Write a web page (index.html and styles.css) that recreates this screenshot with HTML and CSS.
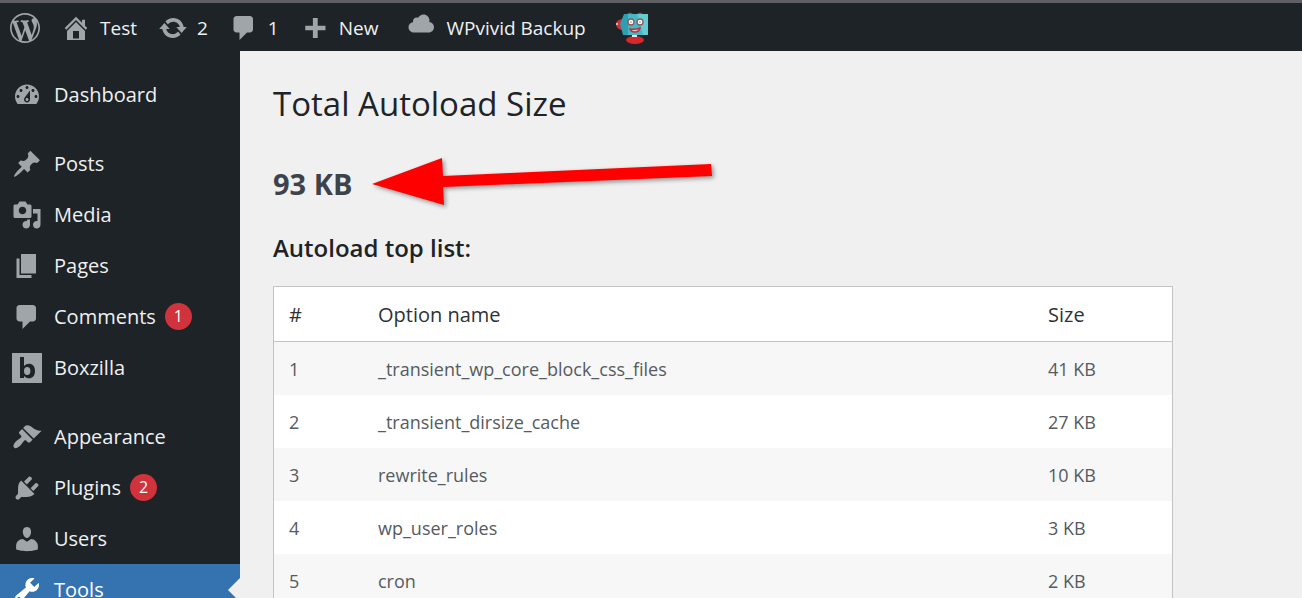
FILE: index.html
```html
<!DOCTYPE html>
<html lang="en">
<head>
    <meta charset="UTF-8">
    <meta name="viewport" content="width=device-width, initial-scale=1.0">
    <title>Total Autoload Size</title>
    <link rel="stylesheet" href="styles.css">
</head>
<body>

    <!-- Admin bar -->
    <header class="adminbar">
        <a class="bar-item" href="#" aria-label="About WordPress">
            <svg class="icon" viewBox="0 0 20 20"><path d="M20 10c0-5.51-4.49-10-10-10C4.48 0 0 4.49 0 10c0 5.52 4.48 10 10 10 5.51 0 10-4.48 10-10zM7.78 15.37L4.37 6.22c.55-.02 1.17-.08 1.17-.08.5-.06.44-1.13-.06-1.11 0 0-1.45.11-2.37.11-.18 0-.37 0-.58-.01C4.12 2.69 6.87 1.11 10 1.11c2.33 0 4.45.87 6.05 2.34-.68-.11-1.65.39-1.65 1.58 0 .74.45 1.36.9 2.1.35.61.55 1.36.55 2.46 0 1.49-1.4 5-1.4 5l-3.03-8.37c.54-.02.82-.17.82-.17.5-.05.44-1.25-.06-1.22 0 0-1.44.12-2.38.12-.87 0-2.33-.12-2.33-.12-.5-.03-.56 1.2-.06 1.22l.92.08 1.26 3.41zM17.41 10c.24-.64.74-1.87.43-4.25.7 1.29 1.05 2.71 1.05 4.25 0 3.29-1.73 6.24-4.4 7.78.97-2.59 1.94-5.2 2.92-7.78zM6.1 18.09C3.12 16.65 1.11 13.53 1.11 10c0-1.3.23-2.48.72-3.59C3.25 10.3 4.67 14.2 6.1 18.09zm4.03-6.63l2.58 6.98c-.86.29-1.76.45-2.71.45-.79 0-1.57-.11-2.29-.33.81-2.38 1.62-4.74 2.42-7.1z"/></svg>
        </a>
        <a class="bar-item" href="#">
            <svg class="icon" viewBox="0 0 20 20"><path d="M16 8.5l1.53 1.53-1.06 1.06L10 4.6l-6.47 6.49-1.06-1.06L10 2.5l4 4v-2h2v4zm-6-2.46l6 5.99V18H4v-5.97zM12 17v-5H8v5h4z"/></svg>
            <span>Test</span>
        </a>
        <a class="bar-item" href="#">
            <svg class="icon" viewBox="0 0 20 20"><path d="M10.2 3.28c3.53 0 6.43 2.61 6.92 6h2.08l-3.5 4-3.5-4h2.32c-.45-1.97-2.21-3.45-4.32-3.45-1.45 0-2.73.71-3.54 1.78L4.95 5.66C6.23 4.2 8.11 3.28 10.2 3.28zm-.4 13.44c-3.52 0-6.43-2.61-6.92-6H.8l3.5-4c1.17 1.33 2.33 2.67 3.5 4H5.48c.45 1.97 2.21 3.45 4.32 3.45 1.45 0 2.73-.71 3.54-1.78l1.71 1.95c-1.28 1.46-3.15 2.38-5.25 2.38z"/></svg>
            <span>2</span>
        </a>
        <a class="bar-item" href="#">
            <svg class="icon" viewBox="0 0 20 20"><path d="M5 2h9c1.1 0 2 .9 2 2v7c0 1.1-.9 2-2 2h-2l-5 5v-5H5c-1.1 0-2-.9-2-2V4c0-1.1.9-2 2-2z"/></svg>
            <span>1</span>
        </a>
        <a class="bar-item" href="#">
            <svg class="icon" viewBox="0 0 20 20"><path d="M17 8.5v3h-5.2v5.2H8.6v-5.2H3.5v-3h5.1V3.3h3.2v5.2z"/></svg>
            <span>New</span>
        </a>
        <a class="bar-item plugin-item" href="#">
            <svg class="icon" viewBox="0 3 20 20"><path d="M14.9 9c1.8.2 3.1 1.7 3.1 3.5 0 1.9-1.6 3.5-3.5 3.5h-10C2.6 16 1 14.4 1 12.5 1 10.7 2.3 9.3 4.1 9 4 8.9 4 8.7 4 8.5 4 7.1 5.1 6 6.5 6c.3 0 .7.1.9.2C8.1 4.9 9.4 4 11 4c2.2 0 4 1.8 4 4 0 .4-.1.7-.1 1z"/></svg>
            <span>WPvivid Backup</span>
        </a>
        <a class="bar-item plugin-item" href="#" aria-label="Robot">
            <svg class="robot" viewBox="0 0 34 36">
                <path fill="#c9343a" d="M12 4q3-3 6 0zM22 4q3-3 6 0z"/>
                <path fill="#c9343a" d="M7 9v11q-6-1-6-6 0-4 6-5z"/>
                <circle cx="2" cy="14" r="1" fill="#f3d9da"/>
                <path fill="#2e9fae" d="M9 4L5 14l3 11h6V4z"/>
                <path fill="#45b9c4" d="M13 4h20v21H13z"/>
                <path fill="#62cbd3" d="M22 4h11v21h-5z"/>
                <circle cx="16" cy="12" r="3" fill="#fff" stroke="#8c5763" stroke-width="1.3"/>
                <circle cx="25" cy="12" r="3" fill="#fff" stroke="#8c5763" stroke-width="1.3"/>
                <circle cx="16" cy="12" r="1" fill="#d9a9ae"/>
                <circle cx="25" cy="12" r="1" fill="#d9a9ae"/>
                <path fill="#e9c3c6" stroke="#b8343f" stroke-width="1.5" d="M15 19q5 1 10-1-1 4-5 4-4 0-5-3z"/>
                <ellipse cx="20" cy="30" rx="9" ry="4" fill="#d5282d"/>
                <path fill="#e8e8e8" d="M17 25h5v2h-5z"/>
            </svg>
        </a>
    </header>

    <div class="layout">
        <!-- Sidebar menu -->
        <nav class="sidebar">
            <a class="menu-item" href="#">
                <svg class="icon" viewBox="0 0 20 20"><path d="M3.76 16h12.48c1.1-1.37 1.76-3.11 1.76-5 0-4.42-3.58-8-8-8s-8 3.58-8 8c0 1.89.66 3.63 1.76 5zM10 4c.55 0 1 .45 1 1s-.45 1-1 1-1-.45-1-1 .45-1 1-1zM6 6c.55 0 1 .45 1 1s-.45 1-1 1-1-.45-1-1 .45-1 1-1zm8 0c.55 0 1 .45 1 1s-.45 1-1 1-1-.45-1-1 .45-1 1-1zm-5.37 5.55L12 7v6c0 1.1-.9 2-2 2s-2-.9-2-2c0-.57.24-1.08.63-1.45zM4 10c.55 0 1 .45 1 1s-.45 1-1 1-1-.45-1-1 .45-1 1-1zm12 0c.55 0 1 .45 1 1s-.45 1-1 1-1-.45-1-1 .45-1 1-1zm-5 3c0-.55-.45-1-1-1s-1 .45-1 1 .45 1 1 1 1-.45 1-1z"/></svg>
                Dashboard
            </a>
            <a class="menu-item group-start" href="#">
                <svg class="icon" viewBox="0 0 20 20"><path d="M10.44 3.02l1.82-1.82 6.36 6.35-1.83 1.82c-1.05-.68-2.48-.57-3.41.36l-.75.75c-.92.93-1.04 2.35-.35 3.41l-1.83 1.82-2.41-2.41-2.8 2.79c-.42.42-3.38 2.71-3.8 2.29s1.86-3.39 2.28-3.81l2.79-2.79L4.1 9.36l1.83-1.82c1.05.69 2.48.57 3.4-.36l.75-.75c.93-.92 1.05-2.35.36-3.41z"/></svg>
                Posts
            </a>
            <a class="menu-item" href="#">
                <svg class="icon" viewBox="0 0 20 20"><path d="M13 11V4c0-.55-.45-1-1-1h-1.67L9 1H5L3.67 3H2c-.55 0-1 .45-1 1v7c0 .55.45 1 1 1h10c.55 0 1-.45 1-1zM7 4.5c1.38 0 2.5 1.12 2.5 2.5S8.38 9.5 7 9.5 4.5 8.38 4.5 7 5.62 4.5 7 4.5zM14 6h5v10.5c0 1.38-1.12 2.5-2.5 2.5S14 17.88 14 16.5s1.12-2.5 2.5-2.5c.17 0 .34.02.5.05V9h-3V6zm-4 8.05V13h2v3.5c0 1.38-1.12 2.5-2.5 2.5S7 17.88 7 16.5 8.12 14 9.5 14c.17 0 .34.02.5.05z"/></svg>
                Media
            </a>
            <a class="menu-item" href="#">
                <svg class="icon" viewBox="0 0 20 20"><path d="M6 15V2h10v13H6zm-1 1h8v2H3V5h2v11z"/></svg>
                Pages
            </a>
            <a class="menu-item" href="#">
                <svg class="icon" viewBox="0 0 20 20"><path d="M5 2h9c1.1 0 2 .9 2 2v7c0 1.1-.9 2-2 2h-2l-5 5v-5H5c-1.1 0-2-.9-2-2V4c0-1.1.9-2 2-2z"/></svg>
                Comments <span class="count">1</span>
            </a>
            <a class="menu-item" href="#">
                <svg class="icon" viewBox="0 0 30 30"><path fill-rule="evenodd" d="M0 0h30v30H0zM8 4v21h4v-2c4 4 11 3 11-5s-7-9-11-5V4zM12 18a3.200 4 0 1 0 6.400 0a3.200 4 0 1 0-6.400 0z"/></svg>
                Boxzilla
            </a>
            <a class="menu-item group-start" href="#">
                <svg class="icon" viewBox="0 0 20 20"><path d="M14.48 11.06L7.41 3.99l1.5-1.5c.5-.56 2.3-.47 3.51.32 1.21.8 1.43 1.28 2.91 2.1 1.18.64 2.45 1.26 4.45.85zm-.71.71L6.7 4.7 4.93 6.47c-.39.39-.39 1.02 0 1.41l1.06 1.06c.39.39.39 1.03 0 1.42-.6.6-1.43 1.11-2.21 1.69-.35.26-.7.53-1.01.84C1.43 14.23.4 16.08 1.4 17.07c.99 1 2.84-.03 4.18-1.36.31-.31.58-.66.85-1.02.57-.78 1.08-1.61 1.69-2.21.39-.39 1.02-.39 1.41 0l1.06 1.06c.39.39 1.02.39 1.41 0z"/></svg>
                Appearance
            </a>
            <a class="menu-item" href="#">
                <svg class="icon" viewBox="0 0 20 20"><path d="M13.11 4.36L9.87 7.6 8 5.73l3.24-3.24c.35-.34 1.05-.2 1.56.32.52.51.66 1.21.31 1.55zm-8 1.77l.91-1.12 9.01 9.01-1.19.84c-.71.71-2.63 1.16-3.82 1.16H6.14L4.9 17.26c-.59.59-1.54.59-2.12 0-.59-.58-.59-1.53 0-2.12l1.24-1.24v-3.88c0-1.13.4-3.19 1.09-3.89zm7.26 3.97l3.24-3.24c.34-.35 1.04-.21 1.55.31.52.51.66 1.21.31 1.55l-3.24 3.25z"/></svg>
                Plugins <span class="count">2</span>
            </a>
            <a class="menu-item" href="#">
                <svg class="icon" viewBox="0 0 20 20"><path d="M10 9.25c-2.27 0-2.73-3.44-2.73-3.44C7 4.02 7.82 2 9.97 2c2.16 0 2.98 2.02 2.71 3.81 0 0-.41 3.44-2.68 3.44zm0 2.57L12.72 10c2.39 0 4.52 2.33 4.52 4.53v2.49s-3.65 1.13-7.24 1.13c-3.65 0-7.24-1.13-7.24-1.13v-2.49c0-2.25 1.94-4.48 4.47-4.48z"/></svg>
                Users
            </a>
            <a class="menu-item current" href="#">
                <svg class="icon" viewBox="0 0 20 20"><path d="M16.68 9.77c-1.34 1.34-3.3 1.67-4.95.99l-5.41 6.52c-.99.99-2.59.99-3.58 0s-.99-2.59 0-3.57l6.52-5.42c-.68-1.65-.35-3.61.99-4.95 1.28-1.28 3.12-1.62 4.72-1.06l-2.89 2.89 2.82 2.82 2.86-2.87c.53 1.58.18 3.39-1.08 4.65zM3.81 16.21c.4.39 1.04.39 1.43 0 .4-.4.4-1.04 0-1.43-.39-.4-1.03-.4-1.43 0-.39.39-.39 1.03 0 1.43z"/></svg>
                Tools
            </a>
        </nav>

        <main class="content">
            <h1>Total Autoload Size</h1>
            <div class="total">
                <strong>93 KB</strong>
                <svg class="arrow" viewBox="0 0 346 54"><path d="M0 28L70 2l1 18 268-12 1 12-269 11 1 18z"/></svg>
            </div>
            <h2>Autoload top list:</h2>
            <table class="options">
                <thead>
                    <tr><th class="num">#</th><th>Option name</th><th class="size">Size</th></tr>
                </thead>
                <tbody>
                    <tr><td>1</td><td>_transient_wp_core_block_css_files</td><td>41 KB</td></tr>
                    <tr><td>2</td><td>_transient_dirsize_cache</td><td>27 KB</td></tr>
                    <tr><td>3</td><td>rewrite_rules</td><td>10 KB</td></tr>
                    <tr><td>4</td><td>wp_user_roles</td><td>3 KB</td></tr>
                    <tr><td>5</td><td>cron</td><td>2 KB</td></tr>
                </tbody>
            </table>
        </main>
    </div>

</body>
</html>
```
FILE: styles.css
```css
* {
    box-sizing: border-box;
}

html {
    scrollbar-width: none;
}

body {
    margin: 0;
    font-family: "Open Sans", "Noto Sans", sans-serif;
    font-size: 20px;
    color: #3c434a;
    background-color: #f0f0f1;
}

a {
    color: #f0f0f1;
    text-decoration: none;
}

.icon {
    width: 30px;
    height: 30px;
    flex-shrink: 0;
    fill: #a0a5aa;
}

/* Admin bar */
.adminbar {
    display: flex;
    align-items: center;
    gap: 21px;
    height: 51px;
    padding: 1px 10px 0;
    border-top: 3px solid #605f66;
    background-color: #1d2327;
    font-size: 19px;
}

.bar-item {
    display: flex;
    align-items: center;
    gap: 9px;
}

.plugin-item {
    margin-left: 8px;
}

.robot {
    width: 34px;
    height: 36px;
}

.layout {
    display: flex;
    align-items: stretch;
}

/* Sidebar */
.sidebar {
    width: 240px;
    flex-shrink: 0;
    padding-top: 18px;
    background-color: #1d2327;
}

.menu-item {
    display: flex;
    align-items: center;
    height: 51px;
    padding-left: 12px;
    gap: 12px;
}

.group-start {
    margin-top: 18px;
}

.count {
    width: 27px;
    height: 27px;
    margin-left: -3px;
    border-radius: 50%;
    background-color: #d0333c;
    color: #fff;
    font-size: 16px;
    line-height: 27px;
    text-align: center;
}

.current {
    position: relative;
    background-color: #3572b0;
    color: #fff;
}

.current .icon {
    fill: #fff;
}

.current::after {
    content: "";
    position: absolute;
    right: 0;
    border: 12px solid transparent;
    border-right-color: #f0f0f1;
}

/* Page content */
.content {
    flex: 1;
    padding: 31px 33px 0;
}

h1 {
    margin: 0;
    font-size: 33px;
    font-weight: 400;
    line-height: 44px;
    color: #1d2327;
}

.total {
    display: flex;
    align-items: center;
    gap: 20px;
    margin-top: 30px;
    font-size: 29px;
}

.arrow {
    width: 346px;
    height: 54px;
    fill: #fe0000;
    filter: drop-shadow(2px 2px 2px rgba(0, 0, 0, 0.4));
}

h2 {
    margin: 21px 0;
    font-size: 24px;
    font-weight: 600;
    line-height: 34px;
    color: #1d2327;
}

.options {
    width: 100%;
    max-width: 900px;
    table-layout: fixed;
    border: 1px solid #c3c4c7;
    border-spacing: 0;
    background-color: #fff;
}

.options th,
.options td {
    height: 53px;
    padding: 0 15px;
    text-align: left;
}

.options th {
    height: 55px;
    border-bottom: 1px solid #c3c4c7;
    font-weight: 400;
    color: #2c3338;
}

.options td {
    font-size: 18px;
    color: #555b60;
}

.options tbody tr:nth-child(odd) {
    background-color: #f7f7f7;
}

.num {
    width: 89px;
}

.size {
    width: 139px;
}
```
